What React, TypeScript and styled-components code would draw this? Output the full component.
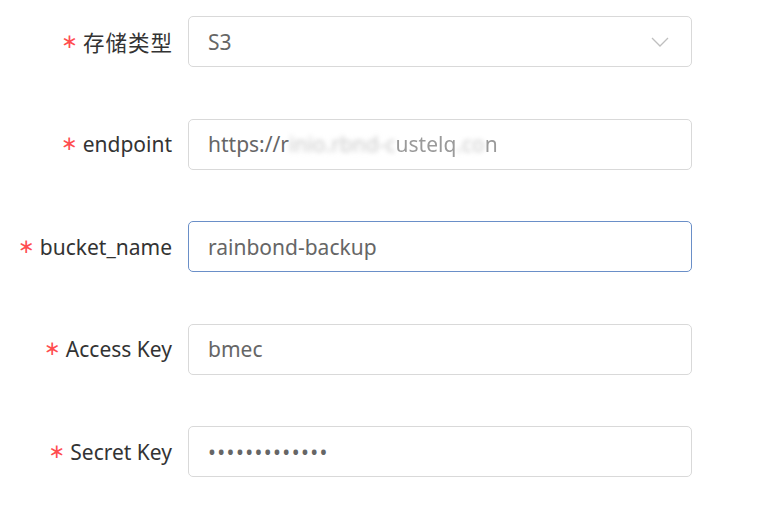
import styled, { createGlobalStyle } from 'styled-components';

const GlobalStyle = createGlobalStyle`
  html, body {
    margin: 0;
    padding: 0;
    background: #fff;
  }
  body {
    font-family: "Noto Sans", "Open Sans", "Noto Sans CJK SC", sans-serif;
  }
`

const Form = styled.form`
  display: flex;
  flex-direction: column;
  gap: 51.5px;
  padding-top: 16px;
  width: 777px;
`

const Row = styled.div`
  display: flex;
  align-items: center;
  height: 51px;
`

const Label = styled.label`
  width: 172px;
  display: flex;
  justify-content: flex-end;
  align-items: center;
  margin-right: 16px;
  font-size: 21px;
  color: #333;
  white-space: nowrap;
`

const Cjk = styled.span`
  font-family: "Noto Sans CJK SC", sans-serif;
  font-size: 21.5px;
  letter-spacing: 1px;
  margin-right: -1px;
`

const Star = styled.span`
  color: #ff4d4f;
  font-family: "DejaVu Sans", sans-serif;
  font-size: 20px;
  margin-right: 5px;
  position: relative;
  top: -1px;
`

const Field = styled.div<{ $focused?: boolean }>`
  width: 504px;
  height: 51px;
  box-sizing: border-box;
  border: 1px solid ${(p) => (p.$focused ? '#6a8fc8' : '#d9d9d9')};
  border-radius: 5px;
  display: flex;
  align-items: center;
  justify-content: space-between;
  padding: 0 22px 0 19px;
  font-size: 21px;
  color: #666;
  background: #fff;
`

const Value = styled.span<{ $dots?: boolean }>`
  white-space: nowrap;
  letter-spacing: ${(p) => (p.$dots ? '1.4px' : '0')};
`

const Blur = styled.span<{ $soft?: boolean }>`
  color: ${(p) => (p.$soft ? '#9a9a9a' : '#c8c8c8')};
  filter: blur(${(p) => (p.$soft ? '0.7px' : '2.5px')});
`

const Chevron = () => (
  <svg width="18" height="10" viewBox="0 0 18 10" fill="none">
    <path d="M1 1 L9 9 L17 1" stroke="#bfbfbf" strokeWidth="1.3" />
  </svg>
)

function App() {
  return (
    <>
      <GlobalStyle />
      <Form>
        <Row>
          <Label><Star>∗</Star><Cjk>存储类型</Cjk></Label>
          <Field>
            <Value>S3</Value>
            <Chevron />
          </Field>
        </Row>
        <Row>
          <Label><Star>∗</Star>endpoint</Label>
          <Field>
            <Value>
              https://r<Blur>inio.rbnd-c</Blur><Blur $soft>ustelq</Blur><Blur>.co</Blur><Blur $soft>n</Blur>
            </Value>
          </Field>
        </Row>
        <Row>
          <Label><Star>∗</Star>bucket_name</Label>
          <Field $focused>
            <Value>rainbond-backup</Value>
          </Field>
        </Row>
        <Row>
          <Label><Star>∗</Star>Access Key</Label>
          <Field>
            <Value>bmec</Value>
          </Field>
        </Row>
        <Row>
          <Label><Star>∗</Star>Secret Key</Label>
          <Field>
            <Value $dots>•••••••••••••</Value>
          </Field>
        </Row>
      </Form>
    </>
  )
}

export default App
